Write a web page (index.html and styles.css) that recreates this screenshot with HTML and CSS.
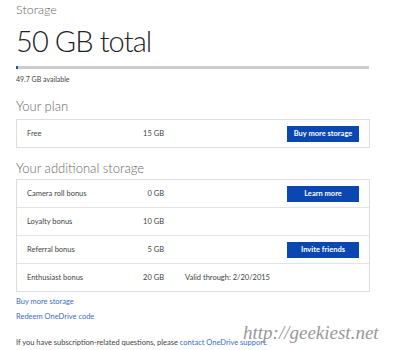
FILE: index.html
```html
<!DOCTYPE html>
<html lang="en">

<head>
    <meta charset="UTF-8">
    <meta name="viewport" content="width=device-width, initial-scale=1.0">
    <title>Storage</title>
    <link rel="stylesheet" href="styles.css">
</head>

<body>

    <div class="page">
        <div class="eyebrow">Storage</div>
        <h1>50 GB total</h1>

        <div class="meter">
            <div class="meter-used" style="width: 0.6%"></div>
        </div>
        <div class="available">49.7 GB available</div>

        <!-- Plan -->
        <h2>Your plan</h2>
        <div class="box">
            <div class="row">
                <span class="label">Free</span>
                <span class="size">15 GB</span>
                <span class="note"></span>
                <button class="btn">Buy more storage</button>
            </div>
        </div>

        <!-- Additional storage -->
        <h2 class="extra">Your additional storage</h2>
        <div class="box">
            <div class="row">
                <span class="label">Camera roll bonus</span>
                <span class="size">0 GB</span>
                <span class="note"></span>
                <button class="btn">Learn more</button>
            </div>
            <div class="row">
                <span class="label">Loyalty bonus</span>
                <span class="size">10 GB</span>
                <span class="note"></span>
            </div>
            <div class="row">
                <span class="label">Referral bonus</span>
                <span class="size">5 GB</span>
                <span class="note"></span>
                <button class="btn">Invite friends</button>
            </div>
            <div class="row">
                <span class="label">Enthusiast bonus</span>
                <span class="size">20 GB</span>
                <span class="note">Valid through: 2/20/2015</span>
            </div>
        </div>

        <div class="links">
            <a href="#">Buy more storage</a>
            <a href="#">Redeem OneDrive code</a>
        </div>

        <p class="help">If you have subscription-related questions, please <a href="#">contact OneDrive support.</a></p>

        <div class="watermark">http://geekiest.net</div>
    </div>

</body>

</html>
```

FILE: styles.css
```css
body {
    margin: 0;
    font-family: Lato, "Open Sans", Arial, sans-serif;
    color: #333;
    background: #fff;
}

.page {
    position: relative;
    width: 354px;
    padding: 2px 0 0 16px;
    height: 348px;
}

.eyebrow {
    font-size: 12.5px;
    font-weight: 300;
    color: #666;
    line-height: 16px;
}

h1 {
    margin: 6px 0 0 0;
    font-size: 29px;
    font-weight: 300;
    letter-spacing: -0.9px;
    line-height: 34px;
    color: #222;
}

.meter {
    margin-top: 8px;
    width: 353px;
    height: 3px;
    background: #ccc;
}

.meter-used {
    height: 100%;
    background: #1a52b5;
}

.available {
    margin-top: 5px;
    font-size: 7px;
    line-height: 10px;
    color: #444;
}

h2 {
    margin: 14px 0 0 0;
    font-size: 13px;
    font-weight: 300;
    line-height: 16px;
    color: #666;
}

h2.extra {
    margin-top: 12px;
}

.box {
    margin-top: 5px;
    border: 1px solid #ddd;
}

h2.extra + .box {
    margin-top: 3px;
}

.row {
    display: grid;
    grid-template-columns: 114px 23px 1fr 72px;
    align-items: center;
    height: 27px;
    padding: 0 10px;
    font-size: 7.5px;
    color: #444;
}

.row + .row {
    border-top: 1px solid #e3e3e3;
}

.size {
    text-align: right;
}

.note {
    padding-left: 21px;
}

.btn {
    grid-column: 4;
    height: 16px;
    padding: 0;
    border: none;
    background: #0a47b0;
    color: #fff;
    font-family: inherit;
    font-size: 7.5px;
    font-weight: 700;
    cursor: pointer;
}

.links {
    display: flex;
    flex-direction: column;
    gap: 5px;
    margin-top: 5px;
}

a {
    font-size: 7.5px;
    color: #3a6cc0;
    text-decoration: none;
    line-height: 10px;
}

.help {
    margin: 16px 0 0 0;
    font-size: 7.5px;
    line-height: 10px;
    color: #444;
}

.watermark {
    position: absolute;
    left: 243px;
    top: 322px;
    font-family: "Liberation Serif", serif;
    font-style: italic;
    font-size: 19px;
    color: #999;
}
```
